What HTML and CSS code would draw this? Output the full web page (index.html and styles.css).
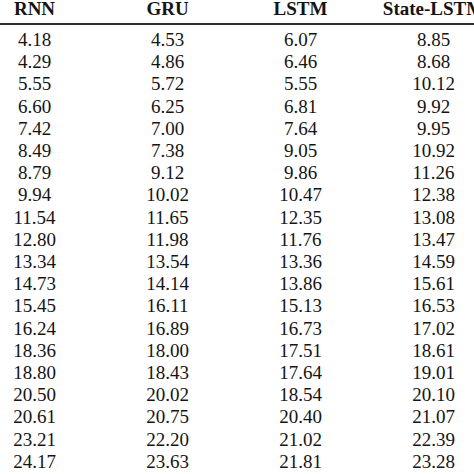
FILE: index.html
```html
<!DOCTYPE html>
<html>
<head>
<meta charset="utf-8">
<link rel="stylesheet" href="styles.css">
</head>
<body>
<table class="results">
  <thead>
    <tr><th>RNN</th><th>GRU</th><th>LSTM</th><th>State-LSTM</th></tr>
  </thead>
  <tbody>
    <tr class="first"><td>4.18</td><td>4.53</td><td>6.07</td><td>8.85</td></tr>
    <tr><td>4.29</td><td>4.86</td><td>6.46</td><td>8.68</td></tr>
    <tr><td>5.55</td><td>5.72</td><td>5.55</td><td>10.12</td></tr>
    <tr><td>6.60</td><td>6.25</td><td>6.81</td><td>9.92</td></tr>
    <tr><td>7.42</td><td>7.00</td><td>7.64</td><td>9.95</td></tr>
    <tr><td>8.49</td><td>7.38</td><td>9.05</td><td>10.92</td></tr>
    <tr><td>8.79</td><td>9.12</td><td>9.86</td><td>11.26</td></tr>
    <tr><td>9.94</td><td>10.02</td><td>10.47</td><td>12.38</td></tr>
    <tr><td>11.54</td><td>11.65</td><td>12.35</td><td>13.08</td></tr>
    <tr><td>12.80</td><td>11.98</td><td>11.76</td><td>13.47</td></tr>
    <tr><td>13.34</td><td>13.54</td><td>13.36</td><td>14.59</td></tr>
    <tr><td>14.73</td><td>14.14</td><td>13.86</td><td>15.61</td></tr>
    <tr><td>15.45</td><td>16.11</td><td>15.13</td><td>16.53</td></tr>
    <tr><td>16.24</td><td>16.89</td><td>16.73</td><td>17.02</td></tr>
    <tr><td>18.36</td><td>18.00</td><td>17.51</td><td>18.61</td></tr>
    <tr><td>18.80</td><td>18.43</td><td>17.64</td><td>19.01</td></tr>
    <tr><td>20.50</td><td>20.02</td><td>18.54</td><td>20.10</td></tr>
    <tr><td>20.61</td><td>20.75</td><td>20.40</td><td>21.07</td></tr>
    <tr><td>23.21</td><td>22.20</td><td>21.02</td><td>22.39</td></tr>
    <tr><td>24.17</td><td>23.63</td><td>21.81</td><td>23.28</td></tr>
  </tbody>
</table>
</body>
</html>
```
FILE: styles.css
```css
html, body {
  margin: 0;
  padding: 0;
  background: #ffffff;
  overflow: hidden;
  width: 474px;
  height: 474px;
}
.results {
  border-collapse: collapse;
  table-layout: fixed;
  width: 532px;
  margin-left: -32px;
  font-family: "Liberation Serif", "Times New Roman", serif;
  font-size: 19px;
  color: #141414;
}
.results th {
  width: 133px;
  padding: 0 0 6px 0;
  line-height: 17px;
  font-weight: bold;
  text-align: center;
  white-space: nowrap;
  border-bottom: 2px solid #2e2e2e;
}
.results td {
  padding: 0;
  line-height: 22.2px;
  text-align: center;
  white-space: nowrap;
}
.results tr.first td {
  padding-top: 4px;
}
```
